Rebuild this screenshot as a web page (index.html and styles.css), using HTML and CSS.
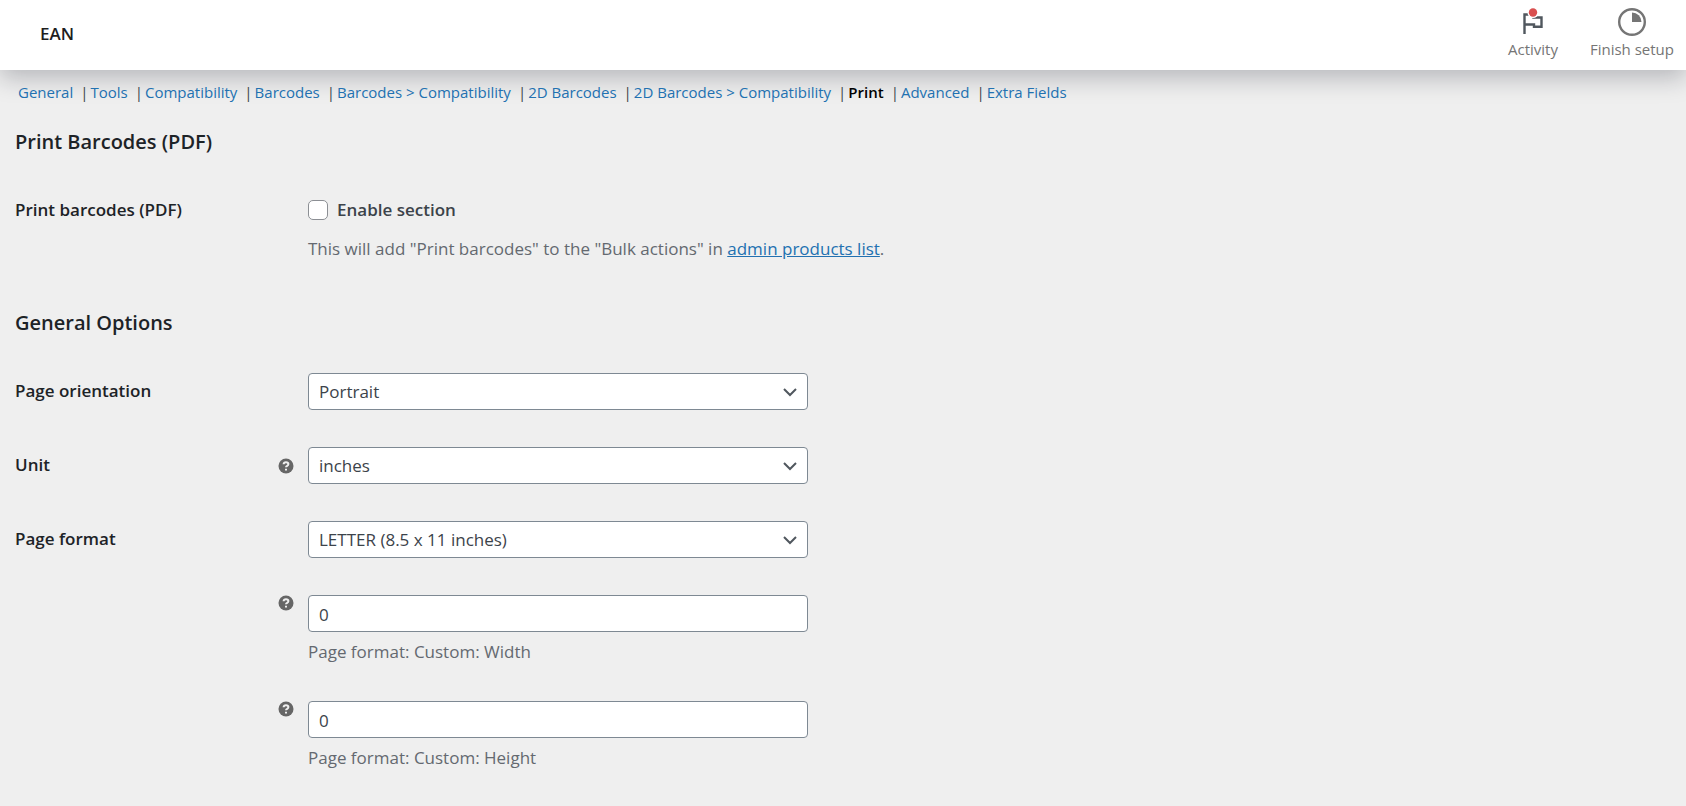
FILE: index.html
```html
<!DOCTYPE html>
<html lang="en">
<head>
<meta charset="utf-8">
<title>EAN</title>
<link rel="stylesheet" href="styles.css">
</head>
<body>
<header class="topbar">
  <h1 class="topbar-title">EAN</h1>
  <div class="topbar-actions">
    <button type="button" class="action">
      <svg class="action-icon" viewBox="0 0 28 28" aria-hidden="true">
        <path d="M5.500 26V6.500H14.500V9.500H22.500V18.800H15V16.500H5.500" fill="none" stroke="#50575e" stroke-width="2.400"/>
        <circle cx="14" cy="4.500" r="5.500" fill="#fff"/>
        <circle cx="14" cy="4.500" r="4.200" fill="#d94f4f"/>
      </svg>
      Activity
    </button>
    <button type="button" class="action">
      <svg class="action-icon" viewBox="0 0 28 28" aria-hidden="true">
        <circle cx="14" cy="14" r="12.800" fill="none" stroke="#757575" stroke-width="2.400"/>
        <path d="M14 14V4.500A9.500 9.500 0 0 1 23.500 14Z" fill="#757575"/>
      </svg>
      Finish setup
    </button>
  </div>
</header>
<main class="content">
  <nav>
    <ul class="sections">
      <li><a href="#general">General</a></li>
      <li><a href="#tools">Tools</a></li>
      <li><a href="#compatibility">Compatibility</a></li>
      <li><a href="#barcodes">Barcodes</a></li>
      <li><a href="#barcodes-compatibility">Barcodes &gt; Compatibility</a></li>
      <li><a href="#2d">2D Barcodes</a></li>
      <li><a href="#2d-compatibility">2D Barcodes &gt; Compatibility</a></li>
      <li><a href="#print" class="current" aria-current="page">Print</a></li>
      <li><a href="#advanced">Advanced</a></li>
      <li><a href="#extra">Extra Fields</a></li>
    </ul>
  </nav>
  <form>
    <section class="group">
      <h2>Print Barcodes (PDF)</h2>
      <div class="row">
        <span class="label">Print barcodes (PDF)</span>
        <div class="field">
          <label class="check"><input type="checkbox">Enable section</label>
          <p class="note note-wide">This will add "Print barcodes" to the "Bulk actions" in <a href="#products">admin products list</a>.</p>
        </div>
      </div>
    </section>
    <section class="group">
      <h2>General Options</h2>
      <div class="row">
        <label class="label" for="orientation">Page orientation</label>
        <div class="field">
          <div class="select"><select id="orientation"><option>Portrait</option><option>Landscape</option></select><svg viewBox="0 0 16 16" aria-hidden="true"><path d="M2 5l6 6 6-6"/></svg></div>
        </div>
      </div>
      <div class="row">
        <label class="label" for="unit">Unit</label>
        <svg class="help" viewBox="0 0 16 16" role="img" aria-label="Help"><circle cx="8" cy="8" r="7.500"/><path d="M5.600 6.300Q5.700 4.200 8 4.200T10.400 6.100Q10.400 7.200 9.200 7.800T8 9.300M8 10.800V12.600"/></svg>
        <div class="field">
          <div class="select"><select id="unit"><option>inches</option><option>mm</option></select><svg viewBox="0 0 16 16" aria-hidden="true"><path d="M2 5l6 6 6-6"/></svg></div>
        </div>
      </div>
      <div class="row">
        <label class="label" for="format">Page format</label>
        <div class="field">
          <div class="select"><select id="format"><option>LETTER (8.5 x 11 inches)</option></select><svg viewBox="0 0 16 16" aria-hidden="true"><path d="M2 5l6 6 6-6"/></svg></div>
        </div>
      </div>
      <div class="row">
        <svg class="help help-top" viewBox="0 0 16 16" role="img" aria-label="Help"><circle cx="8" cy="8" r="7.500"/><path d="M5.600 6.300Q5.700 4.200 8 4.200T10.400 6.100Q10.400 7.200 9.200 7.800T8 9.300M8 10.800V12.600"/></svg>
        <div class="field">
          <input class="text" type="text" id="width" value="0">
          <label class="note" for="width">Page format: Custom: Width</label>
        </div>
      </div>
      <div class="row">
        <svg class="help help-top" viewBox="0 0 16 16" role="img" aria-label="Help"><circle cx="8" cy="8" r="7.500"/><path d="M5.600 6.300Q5.700 4.200 8 4.200T10.400 6.100Q10.400 7.200 9.200 7.800T8 9.300M8 10.800V12.600"/></svg>
        <div class="field">
          <input class="text" type="text" id="height" value="0">
          <label class="note" for="height">Page format: Custom: Height</label>
        </div>
      </div>
    </section>
  </form>
</main>
</body>
</html>
```
FILE: styles.css
```css
* { box-sizing: border-box; }

body {
  margin: 0;
  background: #efefef;
  color: #3c434a;
  font-family: "Open Sans", "Noto Sans", sans-serif;
  font-size: 17px;
  line-height: 24px;
}

h1, h2, p, ul { margin: 0; padding: 0; }
a { color: #2271b1; }

.topbar {
  display: flex;
  justify-content: space-between;
  align-items: center;
  height: 70px;
  padding: 0 12px 3px 40px;
  background: #fff;
  box-shadow: 0 8px 24px rgba(20, 25, 40, 0.26);
}

.topbar-title {
  color: #1e1e1e;
  font-size: 17px;
  font-weight: 600;
}

.topbar-actions { display: flex; gap: 32px; }

.action {
  display: flex;
  flex-direction: column;
  align-items: center;
  gap: 3px;
  padding: 0;
  border: 0;
  background: none;
  color: #757575;
  font: inherit;
  font-size: 15px;
  line-height: 20px;
}

.action-icon { width: 28px; height: 28px; }

.content { padding: 10px 15px 24px; }

.sections {
  display: flex;
  flex-wrap: wrap;
  padding-left: 3px;
  list-style: none;
  font-size: 15px;
}

.sections li + li::before {
  content: "|";
  padding: 0 2px 0 7px;
}

.sections a { text-decoration: none; }
.sections .current { color: #000; font-weight: 600; }

.group { padding-top: 24px; }
.group + .group { padding-top: 48px; }

h2 {
  margin-bottom: 36px;
  color: #1d2327;
  font-size: 20px;
  font-weight: 600;
  line-height: 28px;
}

.row {
  display: grid;
  grid-template-columns: 263px 30px minmax(0, 500px);
  align-items: start;
}

.row + .row { margin-top: 37px; }

.label {
  grid-column: 1;
  grid-row: 1;
  padding-top: 6px;
  color: #1d2327;
  font-weight: 600;
}

.help {
  grid-column: 2;
  grid-row: 1;
  width: 16px;
  height: 16px;
  margin-top: 11px;
  fill: #666;
}

.help-top { margin-top: 0; }

.help path {
  fill: none;
  stroke: #efefef;
  stroke-width: 2;
}

.field { grid-column: 3; grid-row: 1; }

.check {
  display: flex;
  align-items: center;
  gap: 9px;
  padding-top: 6px;
  font-weight: 600;
}

.check input {
  appearance: none;
  width: 20px;
  height: 20px;
  margin: 0;
  border: 1px solid #8c8f94;
  border-radius: 5px;
  background: #fff;
}

.note {
  display: block;
  margin-top: 8px;
  color: #646970;
}

.note-wide { margin-top: 15px; white-space: nowrap; }

.select { position: relative; }

.select svg {
  position: absolute;
  top: 11px;
  right: 10px;
  width: 16px;
  height: 16px;
  fill: none;
  stroke: #50575e;
  stroke-width: 2;
  pointer-events: none;
}

select, .text {
  display: block;
  appearance: none;
  width: 100%;
  height: 37px;
  padding: 1px 10px 0;
  border: 1px solid #7e8993;
  border-radius: 4px;
  background: #fff;
  color: #3c434a;
  font: inherit;
}
```
